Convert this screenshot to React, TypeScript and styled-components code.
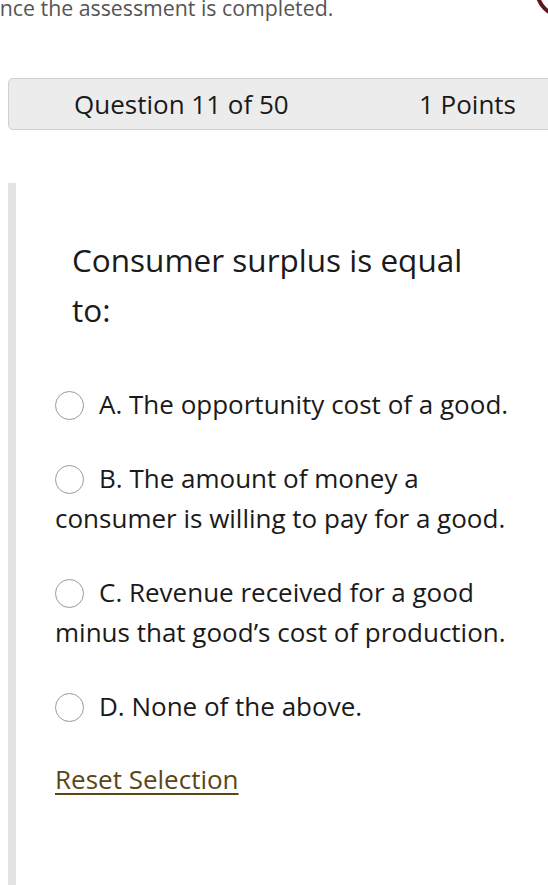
import styled, { createGlobalStyle } from "styled-components";

const GlobalStyle = createGlobalStyle`
    html, body {
        margin: 0;
        padding: 0;
        background: #ffffff;
        overflow: hidden;
        font-family: "Open Sans", "Noto Sans", sans-serif;
        color: #1a1a1a;
    }
`;

const Page = styled.div`
    position: relative;
    width: 582px;
    padding-left: 8px;
    height: 885px;
    overflow: hidden;
`;

const Notice = styled.p`
    margin: -7px 0 0 -21px;
    font-size: 21.3px;
    line-height: 30px;
    color: #555555;
    white-space: nowrap;
`;

const TimerRing = styled.div`
    position: absolute;
    left: 535px;
    top: -38px;
    width: 48px;
    height: 48px;
    border: 4px solid #5e1620;
    border-radius: 50%;
`;

const QuestionBar = styled.div`
    margin-top: 55px;
    height: 50px;
    display: flex;
    align-items: center;
    justify-content: space-between;
    padding: 0 73px 0 65px;
    background: #ececec;
    border: 1px solid #cfcfcf;
    border-radius: 5px;
    font-size: 26px;
    color: #1a1a1a;
`;

const Card = styled.section`
    margin-top: 53px;
    border-left: 8px solid #e3e3e3;
    padding: 52px 0 140px 39px;
`;

const Prompt = styled.h2`
    margin: 0 0 49px 17px;
    width: 410px;
    font-size: 31.5px;
    line-height: 50px;
    font-weight: 400;
    color: #1a1a1a;
`;

const Options = styled.div`
    display: flex;
    flex-direction: column;
    gap: 34px;
    width: 470px;
`;

const Option = styled.label`
    display: block;
    font-size: 26px;
    line-height: 40px;
    color: #1a1a1a;
    cursor: pointer;
`;

const Radio = styled.span`
    display: inline-block;
    box-sizing: border-box;
    width: 29px;
    height: 29px;
    margin-right: 15px;
    border: 1px solid #9a9a9a;
    border-radius: 50%;
    background: #ffffff;
    vertical-align: middle;
    position: relative;
    top: -2px;
`;

const ResetLink = styled.a`
    display: inline-block;
    margin-top: 33px;
    font-size: 26px;
    line-height: 40px;
    color: #5b4716;
    text-decoration: underline;
    text-underline-offset: 4px;
    text-decoration-thickness: 2px;
`;

const options = [
    "A. The opportunity cost of a good.",
    "B. The amount of money a consumer is willing to pay for a good.",
    "C. Revenue received for a good minus that good\u2019s cost of production.",
    "D. None of the above.",
];

function App() {
    return (
        <>
            <GlobalStyle />
            <Page>
                <TimerRing />
                <Notice>once the assessment is completed.</Notice>
                <QuestionBar>
                    <span>Question 11 of 50</span>
                    <span>1 Points</span>
                </QuestionBar>
                <Card>
                    <Prompt>Consumer surplus is equal to:</Prompt>
                    <Options>
                        { options.map((text) => (
                            <Option key={ text }>
                                <Radio />
                                { text }
                            </Option>
                        )) }
                    </Options>
                    <ResetLink href="#">Reset Selection</ResetLink>
                </Card>
            </Page>
        </>
    );
}

export default App;
